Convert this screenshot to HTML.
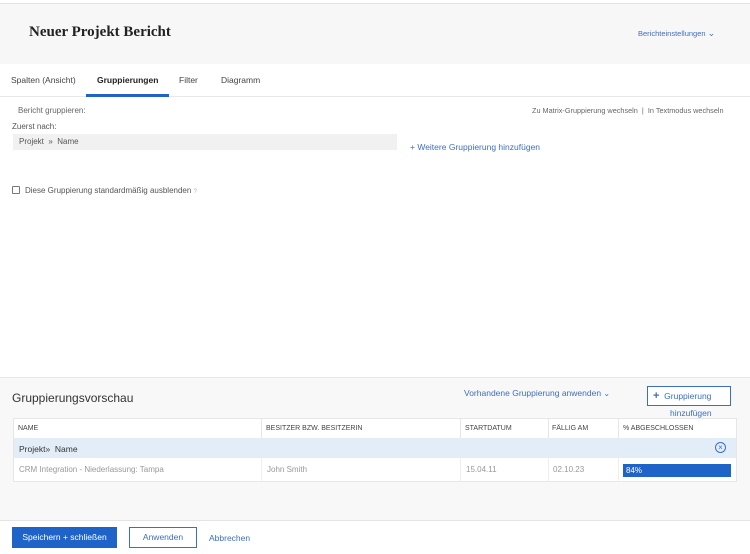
<!DOCTYPE html>
<html><head><meta charset="utf-8"><style>
*{box-sizing:border-box;margin:0;padding:0}
body{width:750px;height:554px;background:#fff;font-family:"Liberation Sans",sans-serif;position:relative;overflow:hidden;color:#555}
.a{position:absolute;white-space:nowrap}
.blue{color:#3b6fc4}
</style></head><body>
<div class="a" style="left:0;top:3px;width:750px;height:61px;background:#f7f7f7;border-top:1px solid #e2e2e2"></div>
<div class="a" style="left:29px;top:24px;font-family:'Liberation Serif',serif;font-weight:bold;font-size:15px;color:#222">Neuer Projekt Bericht</div>
<div class="a blue" style="left:638px;top:28px;font-size:7.5px">Berichteinstellungen <span style="font-size:9px">&#8964;</span></div>
<div class="a" style="left:0;top:96px;width:750px;height:1px;background:#e8e8e8"></div>
<div class="a" style="left:11px;top:75px;font-size:8.5px;color:#444">Spalten (Ansicht)</div>
<div class="a" style="left:97px;top:75px;font-size:8.5px;color:#222;font-weight:bold">Gruppierungen</div>
<div class="a" style="left:86px;top:94px;width:83px;height:3px;background:#1e64c8"></div>
<div class="a" style="left:179px;top:75px;font-size:8.5px;color:#444">Filter</div>
<div class="a" style="left:221px;top:75px;font-size:8.5px;color:#444">Diagramm</div>
<div class="a" style="left:18px;top:106px;font-size:8px;color:#666">Bericht gruppieren:</div>
<div class="a" style="left:532px;top:106px;font-size:7.3px;color:#666">Zu Matrix-Gruppierung wechseln &nbsp;|&nbsp; In Textmodus wechseln</div>
<div class="a" style="left:12px;top:122px;font-size:8px;color:#555">Zuerst nach:</div>
<div class="a" style="left:13px;top:134px;width:384px;height:16px;background:#f1f1f1"></div>
<div class="a" style="left:19px;top:137px;font-size:8px;color:#555">Projekt &nbsp;» &nbsp;Name</div>
<div class="a blue" style="left:410px;top:142px;font-size:8.5px">+ Weitere Gruppierung hinzufügen</div>
<div class="a" style="left:12px;top:186px;width:8px;height:8px;border:1px solid #777;border-radius:1px"></div>
<div class="a" style="left:25px;top:186px;font-size:8px;color:#555">Diese Gruppierung standardmäßig ausblenden <span style="font-size:6px;color:#aaa">?</span></div>

<div class="a" style="left:0;top:377px;width:750px;height:144px;background:#f8f8f8;border-top:1px solid #e8e8e8;border-bottom:1px solid #e4e4e4"></div>
<div class="a" style="left:12px;top:391px;font-size:12px;color:#333">Gruppierungsvorschau</div>
<div class="a blue" style="left:464px;top:388px;font-size:8.5px">Vorhandene Gruppierung anwenden <span style="font-size:8px">&#8964;</span></div>
<div class="a" style="left:647px;top:386px;width:84px;height:20px;border:1px solid #3b6fc4;background:#fff"></div>
<div class="a blue" style="left:653px;top:390px;font-size:8.5px"><b style="font-size:11px">+</b> &nbsp;Gruppierung</div>
<div class="a blue" style="left:670px;top:408px;font-size:8.5px">hinzufügen</div>
<div class="a" style="left:13px;top:418px;width:724px;height:64px;background:#fff;border:1px solid #e6e6e6"></div>
<div class="a" style="left:14px;top:438px;width:722px;height:20px;background:#e3edf8"></div>
<div class="a" style="left:261px;top:419px;width:1px;height:19px;background:#e6e6e6"></div>
<div class="a" style="left:460px;top:419px;width:1px;height:19px;background:#e6e6e6"></div>
<div class="a" style="left:548px;top:419px;width:1px;height:19px;background:#e6e6e6"></div>
<div class="a" style="left:618px;top:419px;width:1px;height:19px;background:#e6e6e6"></div>
<div class="a" style="left:261px;top:458px;width:1px;height:24px;background:#eee"></div>
<div class="a" style="left:460px;top:458px;width:1px;height:24px;background:#eee"></div>
<div class="a" style="left:548px;top:458px;width:1px;height:24px;background:#eee"></div>
<div class="a" style="left:618px;top:458px;width:1px;height:24px;background:#eee"></div>
<div class="a" style="left:18px;top:425px;font-size:7px;color:#444">NAME</div>
<div class="a" style="left:266px;top:425px;font-size:7px;color:#444">BESITZER BZW. BESITZERIN</div>
<div class="a" style="left:465px;top:425px;font-size:7px;color:#444">STARTDATUM</div>
<div class="a" style="left:552px;top:425px;font-size:7px;color:#444">FÄLLIG AM</div>
<div class="a" style="left:623px;top:425px;font-size:7px;color:#444">% ABGESCHLOSSEN</div>
<div class="a" style="left:19px;top:444px;font-size:8.5px;color:#333">Projekt» &nbsp;Name</div>
<div class="a" style="left:715px;top:442px;width:11px;height:11px;border:1px solid #3b6fc4;border-radius:50%;color:#3b6fc4;font-size:8px;line-height:9px;text-align:center">×</div>
<div class="a" style="left:19px;top:465px;font-size:8px;color:#999">CRM Integration - Niederlassung: Tampa</div>
<div class="a" style="left:267px;top:465px;font-size:8px;color:#999">John Smith</div>
<div class="a" style="left:466px;top:465px;font-size:8px;color:#999">15.04.11</div>
<div class="a" style="left:553px;top:465px;font-size:8px;color:#999">02.10.23</div>
<div class="a" style="left:623px;top:464px;width:108px;height:13px;background:#1e64c8;color:#fff;font-size:8px;padding:2px 3px">84%</div>

<div class="a" style="left:12px;top:527px;width:105px;height:21px;background:#1e64c8;color:#fff;font-size:8.5px;text-align:center;line-height:21px">Speichern + schließen</div>
<div class="a blue" style="left:129px;top:527px;width:68px;height:21px;border:1px solid #3b6fc4;font-size:8.5px;text-align:center;line-height:19px">Anwenden</div>
<div class="a blue" style="left:209px;top:533px;font-size:8.5px">Abbrechen</div>
</body></html>
